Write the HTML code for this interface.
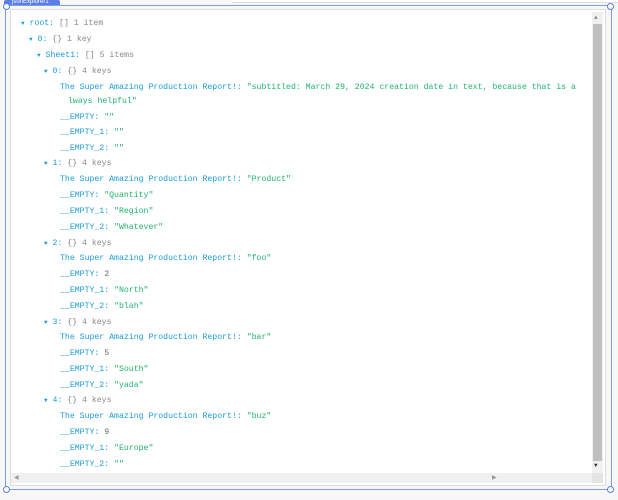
<!DOCTYPE html><html><head><style>
body{margin:0;width:618px;height:500px;background:#f7f7f7;position:relative;overflow:hidden;font-family:"Liberation Mono",monospace;font-size:8.2px}
.r{position:absolute;white-space:pre;line-height:10px}
.k{color:#1a9bd7}.s{color:#21b36b}.g{color:#888}.n{color:#666}
.t{color:#1a9bd7;font-size:6px}
#w{position:absolute;left:0;top:2px;width:618px;height:480px}
</style></head><body>
<div style="position:absolute;left:232px;top:0;width:400px;height:2px;background:#fff;border-bottom:1px solid #ddd"></div>
<div style="position:absolute;left:4px;top:0;width:56px;height:6px;background:#5b7ee6;border-radius:2px;color:#fff;font-family:'Liberation Sans',sans-serif;font-size:6px;line-height:4px;overflow:hidden;padding-left:8px;box-sizing:border-box">jsonExplorer1</div>
<div style="position:absolute;left:5px;top:5px;width:605px;height:483px;border:1px solid #7c9cf0"></div>
<div style="position:absolute;left:3px;top:3px;width:5px;height:5px;border:1px solid #5b7ee6;border-radius:50%;background:#fff"></div>
<div style="position:absolute;left:607px;top:3px;width:5px;height:5px;border:1px solid #5b7ee6;border-radius:50%;background:#fff"></div>
<div style="position:absolute;left:3px;top:486px;width:5px;height:5px;border:1px solid #5b7ee6;border-radius:50%;background:#fff"></div>
<div style="position:absolute;left:607px;top:486px;width:5px;height:5px;border:1px solid #5b7ee6;border-radius:50%;background:#fff"></div>
<div style="position:absolute;left:10px;top:9px;width:594px;height:475px;background:#fff;border:1px solid #ddd"></div>
<div style="position:absolute;left:592px;top:12px;width:11px;height:461px;background:#f0f0f0"></div>
<div style="position:absolute;left:593px;top:24px;width:9px;height:437px;background:#bfbfbf"></div>
<div style="position:absolute;left:594px;top:14px;font-size:6px;color:#888">▲</div>
<div style="position:absolute;left:594px;top:462px;font-size:6px;color:#333">▼</div>
<div style="position:absolute;left:11px;top:473px;width:581px;height:10px;background:#f0f0f0"></div>
<div style="position:absolute;left:14px;top:474px;font-size:6px;color:#999">◀</div>
<div style="position:absolute;left:492px;top:474px;font-size:6px;color:#999">▶</div>
<div style="position:absolute;left:592px;top:473px;width:11px;height:10px;background:#e4e4e4"></div>
<div id="w">
<div class="r" style="left:21px;top:17px"><span class="t">▼</span> <span class="k">root:</span> <span class="g">[] 1 item</span></div>
<div class="r" style="left:29px;top:33px"><span class="t">▼</span> <span class="k">0:</span> <span class="g">{} 1 key</span></div>
<div class="r" style="left:37px;top:49px"><span class="t">▼</span> <span class="k">Sheet1:</span> <span class="g">[] 5 items</span></div>

<div class="r" style="left:44px;top:65px"><span class="t">▼</span> <span class="k">0:</span> <span class="g">{} 4 keys</span></div>
<div class="r" style="left:60px;top:81px"><span class="k">The Super Amazing Production Report!:</span> <span class="s">"subtitled: March 29, 2024 creation date in text, because that is a</span></div>
<div class="r" style="left:68px;top:95px"><span class="s">lways helpful"</span></div>
<div class="r" style="left:60px;top:111px"><span class="k">__EMPTY:</span> <span class="s">""</span></div>
<div class="r" style="left:60px;top:126px"><span class="k">__EMPTY_1:</span> <span class="s">""</span></div>
<div class="r" style="left:60px;top:142px"><span class="k">__EMPTY_2:</span> <span class="s">""</span></div>

<div class="r" style="left:44px;top:157px"><span class="t">▼</span> <span class="k">1:</span> <span class="g">{} 4 keys</span></div>
<div class="r" style="left:60px;top:173px"><span class="k">The Super Amazing Production Report!:</span> <span class="s">"Product"</span></div>
<div class="r" style="left:60px;top:189px"><span class="k">__EMPTY:</span> <span class="s">"Quantity"</span></div>
<div class="r" style="left:60px;top:205px"><span class="k">__EMPTY_1:</span> <span class="s">"Region"</span></div>
<div class="r" style="left:60px;top:221px"><span class="k">__EMPTY_2:</span> <span class="s">"Whatever"</span></div>

<div class="r" style="left:44px;top:237px"><span class="t">▼</span> <span class="k">2:</span> <span class="g">{} 4 keys</span></div>
<div class="r" style="left:60px;top:252px"><span class="k">The Super Amazing Production Report!:</span> <span class="s">"foo"</span></div>
<div class="r" style="left:60px;top:268px"><span class="k">__EMPTY:</span> <span class="n">2</span></div>
<div class="r" style="left:60px;top:284px"><span class="k">__EMPTY_1:</span> <span class="s">"North"</span></div>
<div class="r" style="left:60px;top:300px"><span class="k">__EMPTY_2:</span> <span class="s">"blah"</span></div>

<div class="r" style="left:44px;top:316px"><span class="t">▼</span> <span class="k">3:</span> <span class="g">{} 4 keys</span></div>
<div class="r" style="left:60px;top:331px"><span class="k">The Super Amazing Production Report!:</span> <span class="s">"bar"</span></div>
<div class="r" style="left:60px;top:347px"><span class="k">__EMPTY:</span> <span class="n">5</span></div>
<div class="r" style="left:60px;top:363px"><span class="k">__EMPTY_1:</span> <span class="s">"South"</span></div>
<div class="r" style="left:60px;top:379px"><span class="k">__EMPTY_2:</span> <span class="s">"yada"</span></div>

<div class="r" style="left:44px;top:394px"><span class="t">▼</span> <span class="k">4:</span> <span class="g">{} 4 keys</span></div>
<div class="r" style="left:60px;top:410px"><span class="k">The Super Amazing Production Report!:</span> <span class="s">"buz"</span></div>
<div class="r" style="left:60px;top:426px"><span class="k">__EMPTY:</span> <span class="n">9</span></div>
<div class="r" style="left:60px;top:442px"><span class="k">__EMPTY_1:</span> <span class="s">"Europe"</span></div>
<div class="r" style="left:60px;top:458px"><span class="k">__EMPTY_2:</span> <span class="s">""</span></div>
</div>
</body></html>
